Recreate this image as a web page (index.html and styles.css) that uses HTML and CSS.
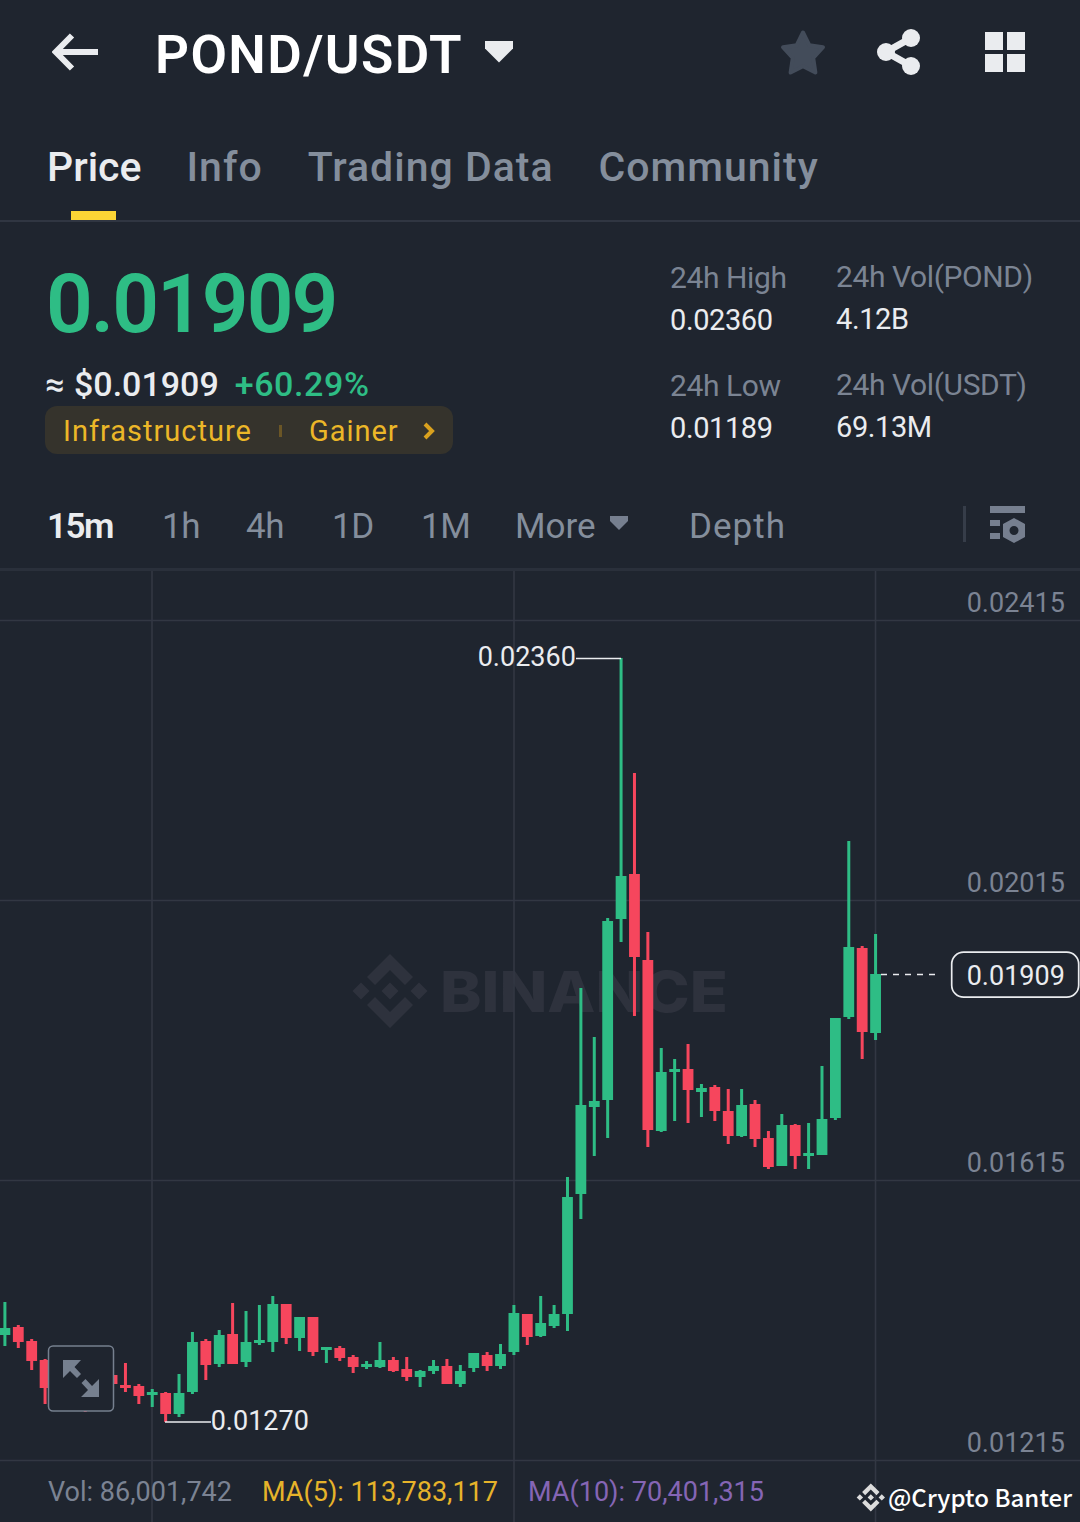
FILE: index.html
```html
<!DOCTYPE html>
<html lang="en">
<head>
  <meta charset="UTF-8">
  <title>POND/USDT</title>
  <link rel="stylesheet" href="styles.css">
</head>
<body>

<header class="topbar">
  <svg class="back" width="46" height="38" viewBox="0 0 46 38"><path d="M20 2.5 L3.8 19 L20 35.5 M4 19 H46" fill="none" stroke="#eaecef" stroke-width="6"/></svg>
  <h1 class="pair">POND/USDT</h1>
  <svg class="caret" width="28" height="22" viewBox="0 0 28 22"><path d="M0 0H28V7.5L14 21.5L0 7.5Z" fill="#eaecef"/></svg>
  <div class="actions">
    <svg width="46" height="48" viewBox="0 0 46 48"><path d="M23 4.500L29.4 17.3L43 19.2L33.2 29.8L35.4 44.5L23 38.3L10.6 44.5L12.8 29.8L3 19.2L16.6 17.3Z" fill="#434c5a" stroke="#434c5a" stroke-width="4" stroke-linejoin="round"/></svg>
    <svg width="44" height="46" viewBox="0 0 44 46"><path d="M34 9L9 23L34 37" fill="none" stroke="#eaecef" stroke-width="7"/><g fill="#eaecef"><circle cx="34" cy="9" r="9"/><circle cx="9" cy="23" r="9"/><circle cx="34" cy="37" r="9"/></g></svg>
    <svg width="40" height="40" viewBox="0 0 40 40" fill="#eaecef"><path d="M0 0H18V18H0ZM22 0H40V18H22ZM0 22H18V40H0ZM22 22H40V40H22Z"/></svg>
  </div>
</header>

<nav class="tabs">
  <a class="active">Price</a>
  <a>Info</a>
  <a>Trading Data</a>
  <a>Community</a>
</nav>

<section class="ticker">
  <div class="quote">
    <div class="last">0.01909</div>
    <div class="fiat"><span class="approx">≈</span><span class="usd">$0.01909</span><span class="change">+60.29%</span></div>
    <div class="tag">
      <span>Infrastructure</span>
      <i></i>
      <span>Gainer</span>
      <svg width="12" height="18" viewBox="0 0 12 18"><path d="M2 2L9 9L2 16" fill="none" stroke="#d9a11e" stroke-width="4"/></svg>
    </div>
  </div>
  <div class="stats">
    <div class="stat"><span>24h High</span><b>0.02360</b></div>
    <div class="stat vol"><span>24h Vol(POND)</span><b>4.12B</b></div>
    <div class="stat"><span>24h Low</span><b>0.01189</b></div>
    <div class="stat vol"><span>24h Vol(USDT)</span><b>69.13M</b></div>
  </div>
</section>

<div class="intervals">
  <span class="active">15m</span>
  <span>1h</span>
  <span>4h</span>
  <span>1D</span>
  <span>1M</span>
  <span class="more">More <svg width="18" height="14" viewBox="0 0 18 14"><path d="M0 0H18V5L9 14L0 5Z" fill="#767f8f"/></svg></span>
  <span class="depth">Depth</span>
  <i></i>
  <svg width="35" height="37" viewBox="0 0 35 37" fill="#767f8f"><path d="M0 0H35V7H0ZM0 14H10V20H0ZM0 27H10V33H0Z"/><path fill-rule="evenodd" d="M24 12L35 18V31L24 37L13 31V18ZM24 20A4.5 4.5 0 1 0 24 29A4.5 4.5 0 1 0 24 20Z"/></svg>
</div>

<svg class="chart" width="1080" height="951" viewBox="0 571 1080 951">
  <g class="watermark">
    <g id="logo">
      <path d="M390 954L413 977L405 985L390 970L375 985L367 977Z"/>
      <path d="M390 1028L413 1005L405 997L390 1012L375 997L367 1005Z"/>
      <path d="M361 982.5L369.5 991L361 999.5L352.5 991ZM390 982.5L398.5 991L390 999.5L381.5 991ZM419 982.5L427.5 991L419 999.5L410.5 991Z"/>
    </g>
    <text x="440" y="1011.5" textLength="288" lengthAdjust="spacingAndGlyphs">BINANCE</text>
  </g>
  <path class="grid" d="M0 620.5H1080M0 900.5H1080M0 1180.5H1080M0 1460.5H1080M152 571V1522M514 571V1522M875.5 571V1522"/>
  <g class="axis">
    <text x="966.700" y="611.5">0.02415</text>
    <text x="966.700" y="891.5">0.02015</text>
    <text x="966.700" y="1171.5">0.01615</text>
    <text x="966.700" y="1451.5">0.01215</text>
  </g>
  <g id="candles"></g>
  <g class="marks">
    <path d="M576 658.5H621M165 1422H211"/>
    <path d="M881 974.5H936" stroke-dasharray="6 6"/>
    <rect x="951.7" y="952.2" width="127" height="45" rx="12"/>
    <text x="966.700" y="984.5">0.01909</text>
    <text x="477.700" y="665.5">0.02360</text>
    <text x="210.700" y="1430">0.01270</text>
  </g>
  <g class="expand">
    <rect x="48.5" y="1346" width="65" height="65" rx="4.5"/>
    <path d="M63 1360H81L74.5 1367L81 1374L77 1378L70 1371L63 1378ZM99 1397H81L88 1390L81.5 1383L85.5 1379L92 1386L99 1379Z"/>
  </g>
  <g class="legend">
    <text x="48" y="1500.5" textLength="184" fill="#7b8393">Vol: 86,001,742</text>
    <text x="262" y="1500.5" textLength="236" fill="#e6b32a">MA(5): 113,783,117</text>
    <text x="528" y="1500.5" textLength="236" fill="#8565b5">MA(10): 70,401,315</text>
  </g>
  <g class="credit">
    <use href="#logo" transform="translate(723.4 1122.8) scale(.378)"/>
    <text x="888" y="1507" textLength="184">@Crypto Banter</text>
  </g>
</svg>

<script src="script.js"></script>
</body>
</html>
```
FILE: styles.css
```css
body {
  margin: 0;
  width: 1080px;
  height: 1522px;
  overflow: hidden;
  background-color: #1f252f;
  color: #eaecef;
  font-family: Roboto, "Liberation Sans", sans-serif;
}

svg {
  display: block;
  flex: none;
}

.topbar {
  display: flex;
  align-items: center;
  height: 104px;
  padding: 0 55px 0 52px;
}

.pair {
  margin: 0 22px 0 57px;
  padding-top: 6px;
  font-size: 53px;
  font-weight: 600;
  line-height: 60px;
  color: #fff;
  letter-spacing: 1.4px;
}

.actions {
  display: flex;
  align-items: center;
  margin-left: auto;
}

.actions svg + svg {
  margin-left: 51px;
}

.actions svg + svg + svg {
  margin-left: 64px;
}

.tabs {
  display: flex;
  gap: 45px;
  height: 116px;
  padding-left: 47px;
  border-bottom: 2px solid #303642;
}

.tabs a {
  position: relative;
  padding-top: 10px;
  font-size: 41px;
  font-weight: 500;
  line-height: 106px;
  letter-spacing: 1px;
  color: #848e9c;
}

.tabs .active {
  letter-spacing: 0;
  color: #eaecef;
}

.tabs .active::after {
  content: "";
  position: absolute;
  left: 24px;
  bottom: 0;
  width: 45px;
  height: 9px;
  background-color: #fcd535;
}

.ticker {
  display: flex;
  height: 258px;
}

.quote {
  width: 625px;
  padding: 40px 0 0 45px;
}

.last {
  padding-left: 1px;
  font-size: 82px;
  font-weight: 600;
  line-height: 84px;
  letter-spacing: -2px;
  color: #2ebd85;
}

.fiat {
  display: flex;
  margin-top: 17px;
  font-size: 34px;
  font-weight: 500;
  line-height: 43px;
}

.approx {
  width: 29px;
}

.change {
  margin-left: 16px;
  letter-spacing: 0.6px;
  color: #2ebd85;
}

.tag {
  display: flex;
  align-items: center;
  box-sizing: border-box;
  width: 408px;
  height: 48px;
  padding: 2px 18px 0;
  border-radius: 12px;
  background-color: #35332c;
  font-size: 29px;
  letter-spacing: 1px;
  color: #ecb728;
}

.tag i {
  width: 3px;
  height: 12px;
  margin: 0 27px;
  background-color: #6b5626;
}

.tag svg {
  margin-left: auto;
}

.stats {
  display: grid;
  grid-template-columns: 166px 240px;
  grid-auto-rows: 84px;
  row-gap: 24px;
  padding-top: 35px;
}

.stat span, .stat b {
  display: block;
  line-height: 42px;
  font-weight: 400;
  letter-spacing: -0.4px;
}

.stat span {
  font-size: 30px;
  color: #7b8493;
}

.stat b {
  font-size: 29px;
}

.vol {
  margin-top: -1px;
}

.intervals {
  display: grid;
  grid-template-columns: 115px 84px 86px 89px 94px 174px 274px 27px 36px;
  align-items: center;
  height: 88px;
  padding-left: 47px;
  border-bottom: 3px solid #2a303b;
  font-size: 35px;
  letter-spacing: -0.5px;
  color: #848e9c;
}

.intervals span {
  padding-top: 5px;
}

.intervals .active {
  font-weight: 600;
  letter-spacing: -1.5px;
  color: #eaecef;
}

.intervals .more {
  display: flex;
  align-items: center;
  gap: 14px;
  letter-spacing: 0;
}

.intervals .more svg {
  margin-top: -7px;
}

.intervals .depth {
  letter-spacing: 1px;
}

.intervals i {
  width: 3px;
  height: 36px;
  background-color: #363d49;
}

.chart text {
  font-size: 27px;
}

.grid {
  fill: none;
  stroke: #323743;
  stroke-width: 1.6;
}

.watermark {
  fill: #2e323d;
}

.chart .watermark text {
  font-family: Inter, sans-serif;
  font-size: 57px;
  font-weight: 800;
}

.axis {
  fill: #7b8393;
}

.up {
  fill: #2ebd85;
}

.down {
  fill: #f6465d;
}

.marks {
  fill: none;
  stroke: #eaecef;
  stroke-width: 1.7;
}

.marks text {
  fill: #eaecef;
  stroke: none;
}

.expand {
  fill: #76808f;
}

.expand rect {
  fill: #1f252f;
  stroke: #76808f;
  stroke-width: 1.5;
}

.credit {
  fill: #fff;
}

.credit use {
  fill: #dcdcdc;
}

.chart .credit text {
  font-family: "Noto Sans CJK SC", sans-serif;
  font-size: 24px;
  font-weight: 500;
}
```
FILE: script.js
```js
// [direction, high, body top, body bottom, low] in chart coordinates
const candles = [
  ["up", 1302, 1328, 1335, 1346], ["down", 1325, 1327, 1342, 1348],
  ["down", 1339, 1341, 1361, 1370], ["down", 1359, 1360, 1388, 1404],
  ["down", 1375, 1385, 1395, 1400], ["up", 1375, 1385, 1395, 1400],
  ["down", 1375, 1385, 1395, 1412], ["up", 1370, 1378, 1390, 1395],
  ["down", 1374, 1375, 1384, 1385], ["down", 1363, 1385, 1388, 1392],
  ["down", 1384, 1386, 1396, 1404], ["up", 1389, 1392, 1395, 1407],
  ["down", 1392, 1393, 1414, 1422], ["up", 1374, 1393, 1414, 1417],
  ["up", 1332, 1342, 1392, 1394], ["down", 1339, 1341, 1365, 1380],
  ["up", 1330, 1335, 1364, 1367], ["down", 1303, 1334, 1364, 1364],
  ["up", 1311, 1342, 1362, 1367], ["up", 1305, 1340, 1343, 1345],
  ["up", 1296, 1304, 1342, 1352], ["down", 1304, 1304, 1338, 1344],
  ["up", 1317, 1317, 1338, 1351], ["down", 1317, 1317, 1352, 1356],
  ["up", 1347, 1347, 1350, 1363], ["down", 1346, 1348, 1358, 1361],
  ["down", 1355, 1357, 1367, 1373], ["up", 1361, 1364, 1367, 1369],
  ["up", 1342, 1360, 1367, 1368], ["down", 1357, 1360, 1371, 1372],
  ["down", 1357, 1369, 1377, 1381], ["up", 1370, 1371, 1377, 1387],
  ["up", 1360, 1366, 1371, 1374], ["down", 1359, 1366, 1384, 1384],
  ["up", 1365, 1371, 1384, 1387], ["up", 1353, 1353, 1368, 1372],
  ["down", 1352, 1355, 1366, 1371], ["up", 1344, 1354, 1366, 1369],
  ["up", 1305, 1313, 1352, 1355], ["down", 1314, 1314, 1337, 1345],
  ["up", 1296, 1323, 1336, 1337], ["up", 1305, 1314, 1326, 1328],
  ["up", 1177, 1197, 1314, 1331], ["up", 988, 1105, 1194, 1219],
  ["up", 1037, 1101, 1107, 1156], ["up", 918, 921, 1100, 1138],
  ["up", 658, 876, 919, 942], ["down", 773, 874, 957, 1016],
  ["down", 932, 960, 1130, 1147], ["up", 1048, 1072, 1131, 1132],
  ["up", 1059, 1069, 1072, 1121], ["down", 1044, 1069, 1090, 1123],
  ["up", 1084, 1088, 1092, 1117], ["down", 1085, 1087, 1111, 1121],
  ["down", 1089, 1111, 1136, 1144], ["up", 1089, 1105, 1136, 1137],
  ["down", 1100, 1104, 1139, 1147], ["down", 1131, 1138, 1167, 1169],
  ["up", 1114, 1125, 1166, 1166], ["down", 1124, 1125, 1156, 1169],
  ["up", 1123, 1153, 1156, 1169], ["up", 1066, 1119, 1155, 1155],
  ["up", 1018, 1018, 1118, 1120], ["up", 841, 947, 1017, 1019],
  ["down", 946, 948, 1032, 1059], ["up", 934, 974, 1033, 1040]
];

const first = 4.9;
const step = 13.395;

document.getElementById("candles").innerHTML = candles.map(([dir, high, top, bottom, low], i) => {
  const x = first + i * step;
  return `<path class="${dir}" d="M${x - 1.5} ${high}h3V${low}h-3ZM${x - 5.4} ${top}h10.8V${bottom}h-10.8Z"/>`;
}).join("");
```
